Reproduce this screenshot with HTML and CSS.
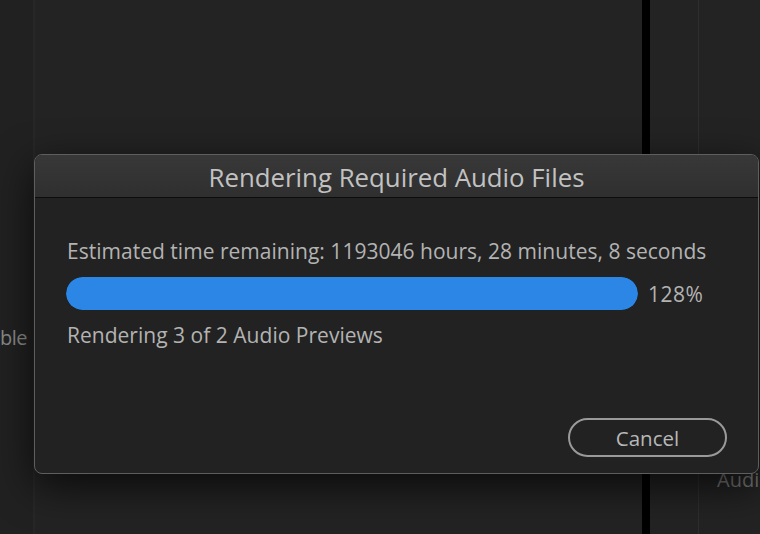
FILE: index.html
```html
<!DOCTYPE html>
<html>
<head>
<meta charset="utf-8">
<link rel="stylesheet" href="styles.css">
</head>
<body>
<div class="desk">
  <div class="panel p1"><span class="ble">ble</span></div>
  <div class="panel p2"></div>
  <div class="gutter"></div>
  <div class="panel p3"></div>
  <div class="panel p4"><span class="audi">Audi</span></div>
</div>
<div class="dialog">
  <div class="titlebar">Rendering Required Audio Files</div>
  <div class="body">
    <div class="line">Estimated time remaining: 1193046 hours, 28 minutes, 8 seconds</div>
    <div class="progress-row">
      <div class="track"><div class="fill" style="width:100%"></div></div>
      <span class="pct">128%</span>
    </div>
    <div class="line">Rendering 3 of 2 Audio Previews</div>
    <div class="actions"><button class="btn">Cancel</button></div>
  </div>
</div>
</body>
</html>
```
FILE: styles.css
```css
html, body {
  margin: 0;
  padding: 0;
  width: 760px;
  height: 534px;
  overflow: hidden;
  background: #1e1e1e;
  font-family: "Open Sans", Lato, sans-serif;
}
.desk {
  display: flex;
  height: 534px;
}
.panel {
  background: #232323;
  position: relative;
}
.p1 {
  width: 33px;
  background: #212121;
  border-right: 2px solid #272727;
}
.p2 {
  width: 607px;
}
.gutter {
  width: 8px;
  background: #000;
}
.p3 {
  width: 48px;
  border-right: 1px solid #2e2e2e;
}
.p4 {
  flex: 1;
}
.ble {
  position: absolute;
  left: 0;
  top: 324px;
  font-size: 20px;
  letter-spacing: -0.5px;
  color: #8a8a8a;
}
.audi {
  position: absolute;
  left: 18px;
  top: 466px;
  font-size: 20px;
  color: #777;
}
.dialog {
  position: absolute;
  left: 34px;
  top: 154px;
  width: 723px;
  height: 318px;
  border: 1px solid #5e5e5e;
  border-radius: 8px;
  background: #222222;
  box-shadow: 0 12px 40px rgba(0,0,0,0.7);
  overflow: hidden;
}
.titlebar {
  height: 42px;
  background: linear-gradient(#383838, #2f2f2f);
  border-bottom: 1px solid #0c0c0c;
  color: #c2c2c2;
  font-size: 25.8px;
  text-align: center;
  line-height: 44px;
}
.body {
  padding: 40px 0 0 32px;
  display: flex;
  flex-direction: column;
}
.line {
  color: #b3b3b3;
  font-size: 21px;
  line-height: 26px;
  letter-spacing: 0.02px;
}
.progress-row {
  display: flex;
  align-items: center;
  gap: 10px;
  margin: 13px 0 12px -1px;
}
.track {
  width: 572px;
  height: 33px;
  border-radius: 17px;
  background: #1a1a1a;
  overflow: hidden;
}
.fill {
  height: 100%;
  background: #2b86e5;
  border-radius: 17px;
}
.pct {
  color: #b3b3b3;
  font-size: 21px;
  letter-spacing: 0.5px;
}
.actions {
  display: flex;
  justify-content: flex-end;
  padding-right: 31px;
  margin-top: 70px;
}
.btn {
  width: 159px;
  height: 39px;
  border: 2px solid #9a9a9a;
  border-radius: 20px;
  background: transparent;
  color: #b8b8b8;
  font-family: "Open Sans", Lato, sans-serif;
  font-size: 20.5px;
  padding: 0;
}
```
